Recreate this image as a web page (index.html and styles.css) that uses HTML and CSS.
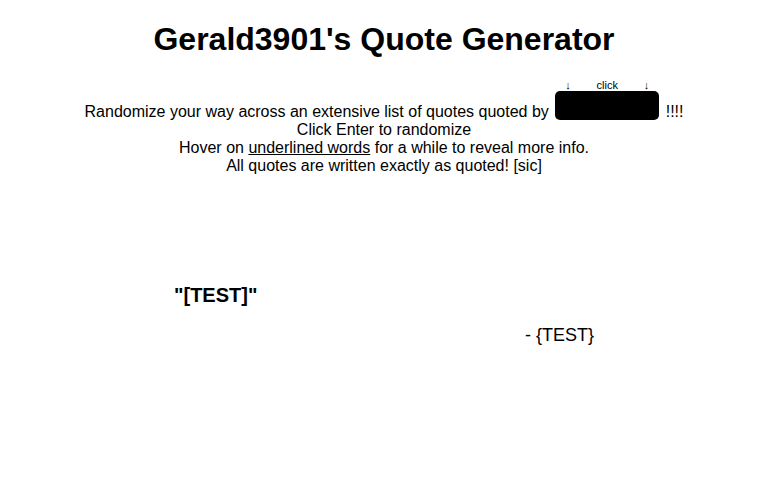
FILE: index.html
```html
<!DOCTYPE html>
<html lang="en">
<head>
<meta charset="utf-8">
<title>Gerald3901's Quote Generator</title>
<link rel="stylesheet" href="styles.css">
</head>
<body>
<h1 class="title">Gerald3901's Quote Generator</h1>
<div class="intro">
  <p class="line">Randomize your way across an extensive list of quotes quoted by <span class="secret"><span class="hint"><span>↓</span><span>click</span><span>↓</span></span></span> !!!!</p>
  <p class="line">Click Enter to randomize</p>
  <p class="line">Hover on <span class="under">underlined words</span> for a while to reveal more info.</p>
  <p class="line">All quotes are written exactly as quoted! [sic]</p>
</div>
<div class="quote-box">
  <p class="quote">"[TEST]"</p>
  <p class="author">- {TEST}</p>
</div>
</body>
</html>
```
FILE: styles.css
```css
html, body {
  margin: 0;
  padding: 0;
  background: #fff;
  color: #000;
  font-family: "Liberation Sans", Arial, sans-serif;
}

.title {
  margin: 21px 0 0;
  font-size: 32px;
  font-weight: bold;
  text-align: center;
  line-height: 37px;
}

.intro {
  margin-top: 33px;
  text-align: center;
  font-size: 16px;
}

.line {
  margin: 0;
  line-height: 18px;
}

.secret {
  position: relative;
  display: inline-block;
  width: 104px;
  height: 29px;
  margin: 0 2px;
  background: #000;
  border-radius: 5px;
  vertical-align: -3px;
}

.hint {
  position: absolute;
  left: 0;
  right: 0;
  top: -12px;
  display: flex;
  justify-content: space-between;
  padding: 0 10px;
  font-size: 11px;
  line-height: 13px;
  color: #000;
}

.under {
  text-decoration: underline;
}

.quote-box {
  width: 420px;
  margin: 109px auto 0;
}

.quote {
  margin: 0;
  font-size: 20px;
  font-weight: bold;
  line-height: 23px;
}

.author {
  margin: 18px 0 0;
  text-align: right;
  font-size: 18px;
  line-height: 21px;
}
```
